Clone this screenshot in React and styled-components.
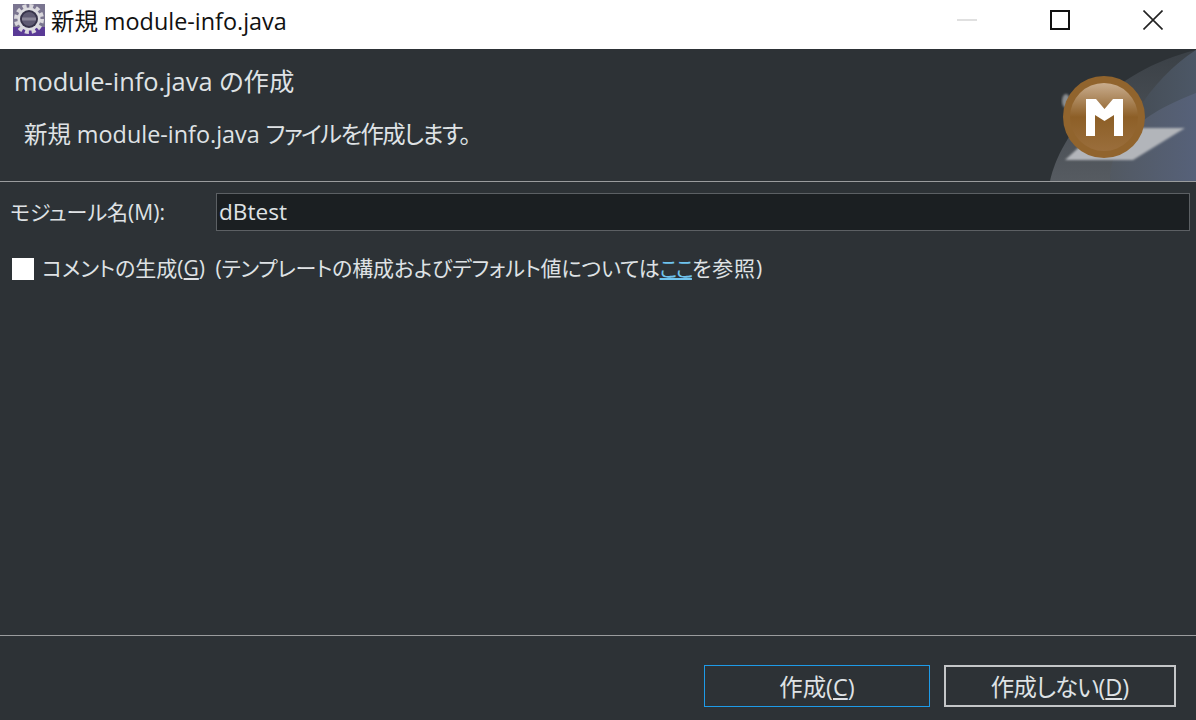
import React from 'react';
import styled, { createGlobalStyle } from 'styled-components';

const GlobalStyle = createGlobalStyle`
    html, body {
        margin: 0;
        padding: 0;
        background-color: #2D3236;
    }
    body {
        font-family: "Open Sans", "Noto Sans CJK JP", sans-serif;
        font-feature-settings: "palt";
    }
`;

const Window = styled.div`
    display: flex;
    flex-direction: column;
    width: 1196px;
    height: 720px;
    overflow: hidden;
    background-color: #2D3236;
    color: #DFE2E5;
`;

const TitleBar = styled.div`
    display: flex;
    align-items: center;
    box-sizing: border-box;
    height: 49px;
    flex-shrink: 0;
    background-color: #fff;
    color: #111;
    padding: 0 0 9px 13px;
`;

const TitleText = styled.span`
    flex: 1;
    margin-left: 6px;
    font-size: 23.4px;
`;

const WindowButtons = styled.div`
    display: flex;
    margin-right: -3px;
`;

const WindowButton = styled.div`
    display: flex;
    align-items: center;
    justify-content: center;
    width: 93px;
    height: 40px;
`;

const Banner = styled.div`
    position: relative;
    box-sizing: border-box;
    height: 133px;
    flex-shrink: 0;
    border-bottom: 1px solid #9A9C9E;
    padding: 17px 0 0 14px;
`;

const BannerTitle = styled.div`
    font-size: 25.4px;
    line-height: 30px;
`;

const BannerMessage = styled.div`
    font-size: 23.4px;
    line-height: 30px;
    margin: 23px 0 0 10px;
`;

const Kana = styled.span`
    letter-spacing: -1.6px;
`;

const BannerArt = styled.svg`
    position: absolute;
    top: 0;
    right: 0;
`;

const Form = styled.div`
    flex: 1;
    padding: 11px 6px 0 10px;
`;

const FieldRow = styled.div`
    display: flex;
    align-items: center;
`;

const FieldLabel = styled.label`
    width: 206px;
    padding-bottom: 2px;
    font-size: 21px;
`;

const TextInput = styled.div`
    flex: 1;
    box-sizing: border-box;
    height: 38px;
    line-height: 35px;
    padding-left: 2px;
    background-color: #1B1F22;
    border: 1px solid #5C6064;
    font-size: 22.6px;
`;

const CheckRow = styled.div`
    display: flex;
    align-items: center;
    margin: 20px 0 0 2px;
    font-size: 21px;
    line-height: 34px;
    word-spacing: 5px;
`;

const CheckBox = styled.span`
    width: 22px;
    height: 22px;
    margin: 1px 8px 0 0;
    background-color: #fff;
`;

const Hint = styled.span`
    letter-spacing: -0.18px;
`;

const Mnemonic = styled.span`
    text-decoration: underline;
`;

const Link = styled.a`
    color: #6FC3EE;
    text-decoration: underline;
    letter-spacing: -2px;
`;

const LinkTail = styled.span`
    letter-spacing: 0.9px;
`;

const Footer = styled.div`
    display: flex;
    justify-content: flex-end;
    gap: 14px;
    height: 85px;
    flex-shrink: 0;
    box-sizing: border-box;
    border-top: 1px solid #9A9C9E;
    padding: 29px 20px 0 0;
`;

const DialogButton = styled.button`
    box-sizing: border-box;
    width: ${(props) => props.$width}px;
    height: 42px;
    padding: 0;
    background-color: #2D3236;
    border: ${(props) => (props.$primary ? '1px solid #1E9BE8' : '2px solid #C4C6C8')};
    color: #DFE2E5;
    font-family: inherit;
    font-feature-settings: inherit;
    font-size: 23.4px;
`;

const ButtonKana = styled.span`
    letter-spacing: -0.8px;
`;

const AppIcon = () => (
    <svg width="32" height="32" viewBox="0 0 32 32">
        <defs>
            <filter id="iconSoft">
                <feGaussianBlur stdDeviation="0.5" />
            </filter>
        </defs>
        <rect x="0" y="0" width="32" height="32" fill="#7A7590" />
        <rect x="0" y="23" width="32" height="9" fill="#5A3A96" />
        <g filter="url(#iconSoft)">
            <circle cx="16" cy="15" r="13" fill="none" stroke="#D9D7DC" strokeWidth="4" strokeDasharray="4 2.8" />
            <circle cx="16" cy="15" r="11.5" fill="#DDDCE0" />
            <circle cx="16" cy="15" r="9" fill="#37334A" />
            <circle cx="16" cy="15" r="7" fill="#5E5A72" />
            <rect x="9" y="13.5" width="14" height="3" fill="#8A8698" />
        </g>
    </svg>
);

const MaximizeIcon = () => (
    <svg width="20" height="20" viewBox="0 0 20 20">
        <rect x="1" y="1" width="18" height="18" fill="none" stroke="#111" strokeWidth="2" />
    </svg>
);

const CloseIcon = () => (
    <svg width="20" height="20" viewBox="0 0 20 20">
        <path d="M0.5 0.5L19.5 19.5M19.5 0.5L0.5 19.5" stroke="#222" strokeWidth="1.6" fill="none" />
    </svg>
);

const MinimizeIcon = () => (
    <svg width="20" height="20" viewBox="0 0 20 20">
        <path d="M0 10H20" stroke="#D8D8D8" strokeWidth="1.6" />
    </svg>
);

const MavenArt = () => (
    <BannerArt width="146" height="132" viewBox="0 0 146 132">
        <defs>
            <linearGradient id="sweep" x1="0" y1="0" x2="1" y2="0">
                <stop offset="0" stopColor="#43494F" />
                <stop offset="1" stopColor="#4C5766" />
            </linearGradient>
            <linearGradient id="lower" x1="0" y1="0" x2="0" y2="1">
                <stop offset="0" stopColor="#3A4046" />
                <stop offset="1" stopColor="#565B61" />
            </linearGradient>
            <linearGradient id="blue" x1="0" y1="0" x2="1" y2="0">
                <stop offset="0" stopColor="#525962" />
                <stop offset="1" stopColor="#566179" />
            </linearGradient>
            <linearGradient id="gloss" x1="0" y1="0" x2="0" y2="1">
                <stop offset="0" stopColor="#C9AD8E" />
                <stop offset="0.5" stopColor="#8D5F27" />
                <stop offset="1" stopColor="#9A6E3C" />
            </linearGradient>
            <filter id="soft">
                <feGaussianBlur stdDeviation="1" />
            </filter>
        </defs>
        <path d="M0 132C10 85 60 22 146 1V132Z" fill="url(#lower)" />
        <path d="M60 132C64 90 100 30 146 1V132Z" fill="url(#sweep)" />
        <path d="M60 132C60 100 78 70 146 44V132Z" fill="url(#blue)" />
        <path d="M15 111L50 79H135L83 111Z" fill="#B2B5BA" filter="url(#soft)" />
        <ellipse cx="16" cy="52" rx="4" ry="7" fill="#C8CACC" opacity="0.6" filter="url(#soft)" />
        <circle cx="54" cy="68" r="41" fill="#91642D" />
        <circle cx="54" cy="68" r="34" fill="url(#gloss)" />
        <path d="M36 87V50H46L54.5 60L63 50H73V87H64V66L54.5 72L45 66V87Z" fill="#fff" />
    </BannerArt>
);

const App = () => {
    return (
        <Window>
            <GlobalStyle />
            <TitleBar>
                <AppIcon />
                <TitleText>新規 module-info.java</TitleText>
                <WindowButtons>
                    <WindowButton><MinimizeIcon /></WindowButton>
                    <WindowButton><MaximizeIcon /></WindowButton>
                    <WindowButton><CloseIcon /></WindowButton>
                </WindowButtons>
            </TitleBar>
            <Banner>
                <BannerTitle>module-info.java の作成</BannerTitle>
                <BannerMessage>新規 module-info.java <Kana>ファイルを作成します。</Kana></BannerMessage>
                <MavenArt />
            </Banner>
            <Form>
                <FieldRow>
                    <FieldLabel>モジュール名(M):</FieldLabel>
                    <TextInput>dBtest</TextInput>
                </FieldRow>
                <CheckRow>
                    <CheckBox />
                    <span>コメントの生成(<Mnemonic>G</Mnemonic>) <Hint>(テンプレートの構成およびデフォルト値については</Hint><Link>ここ</Link><LinkTail>を参照)</LinkTail></span>
                </CheckRow>
            </Form>
            <Footer>
                <DialogButton $primary $width={226}>作成(<Mnemonic>C</Mnemonic>)</DialogButton>
                <DialogButton $width={232}><ButtonKana>作成しない</ButtonKana>(<Mnemonic>D</Mnemonic>)</DialogButton>
            </Footer>
        </Window>
    );
};

export default App;
